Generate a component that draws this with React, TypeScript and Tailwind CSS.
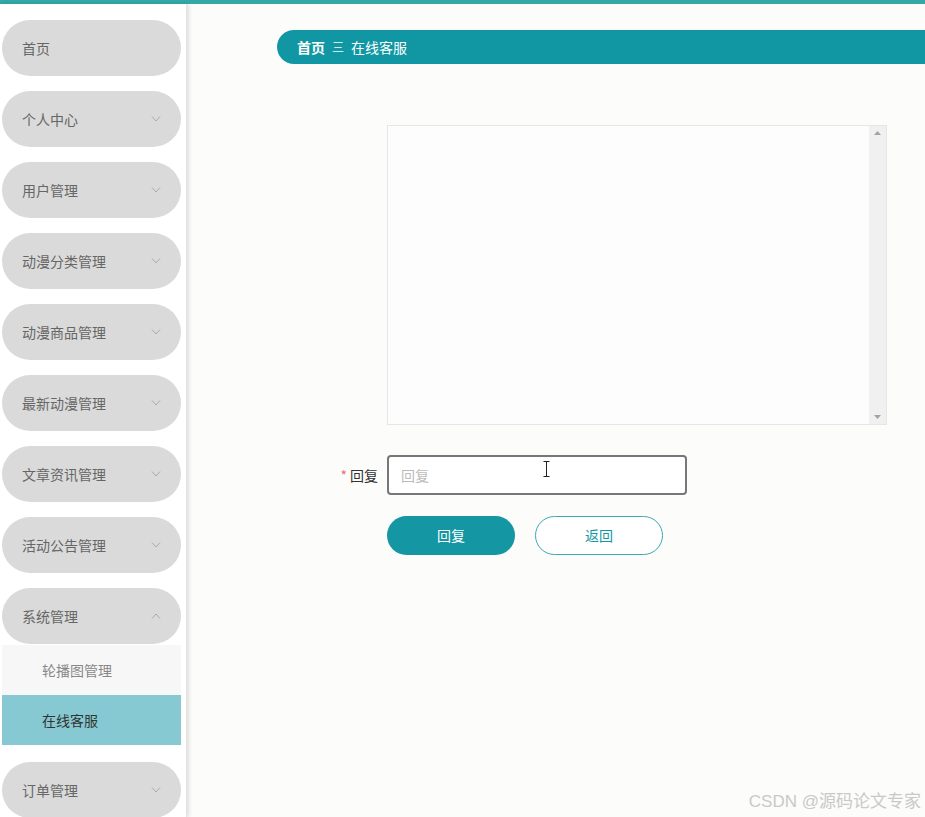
import React from "react";

const Chevron = ({ up }: { up?: boolean }) => (
  <svg width="10" height="6" viewBox="0 0 10 6" className="text-[#aaa]">
    <path d={up ? "M1 5.5 L5 1 L9 5.5" : "M1 0.5 L5 5 L9 0.5"} fill="none" stroke="currentColor" strokeWidth="1" />
  </svg>
);

const Pill = ({ label, arrow, up }: { label: string; arrow?: boolean; up?: boolean }) => (
  <div className="h-[56px] w-[179px] ml-[2px] rounded-full bg-[#dadada] flex items-center justify-between pl-[20px] pr-[20px] text-[14px] text-[#666]">
    <span>{label}</span>
    {arrow && <Chevron up={up} />}
  </div>
);

export default function App() {
  const font = { fontFamily: '"Microsoft YaHei", "Noto Sans CJK SC", "Liberation Sans", sans-serif' };
  return (
    <div className="w-[925px] h-[817px] overflow-hidden bg-[#fcfcfb] flex flex-col" style={font}>
      <div className="h-[4px] bg-[#34a7a6] shrink-0" />
      <div className="flex flex-1 min-h-0">
        <aside className="w-[187px] shrink-0 bg-white shadow-[2px_0_4px_rgba(0,0,0,0.12)] border-r border-[#e2e2e2] flex flex-col pt-[16px]">
          <div className="flex flex-col gap-[15px]">
            <Pill label="首页" />
            <Pill label="个人中心" arrow />
            <Pill label="用户管理" arrow />
            <Pill label="动漫分类管理" arrow />
            <Pill label="动漫商品管理" arrow />
            <Pill label="最新动漫管理" arrow />
            <Pill label="文章资讯管理" arrow />
            <Pill label="活动公告管理" arrow />
            <div>
              <Pill label="系统管理" arrow up />
              <div className="ml-[2px] w-[179px] mt-[1px]">
                <div className="h-[50px] bg-[#f7f7f7] flex items-center pl-[40px] text-[14px] text-[#888]">轮播图管理</div>
                <div className="h-[50px] bg-[#86c9d2] flex items-center pl-[40px] text-[14px] text-[#333]">在线客服</div>
              </div>
            </div>
          </div>
          <div className="mt-[17px]">
            <Pill label="订单管理" arrow />
          </div>
        </aside>
        <main className="flex-1 relative flex flex-col">
          <div className="mt-[26px] ml-[90px] h-[34px] rounded-l-full bg-[#1197a4] flex items-center pl-[20px] text-[14px] text-white">
            <span className="font-bold">首页</span>
            <span className="mx-[7px] text-[12px] opacity-80">三</span>
            <span>在线客服</span>
          </div>
          <div className="ml-[200px] mt-[61px] w-[500px] h-[300px] border border-[#e6e6e6] bg-[#fdfdfd] flex justify-end">
            <div className="w-[17px] h-full bg-[#f0f0f0] flex flex-col items-center justify-between py-[5px]">
              <svg width="7" height="4" viewBox="0 0 7 4"><path d="M0 4 L3.5 0 L7 4Z" fill="#a3a3a3" /></svg>
              <svg width="7" height="4" viewBox="0 0 7 4"><path d="M0 0 L3.5 4 L7 0Z" fill="#a3a3a3" /></svg>
            </div>
          </div>
          <div className="mt-[30px] flex items-center">
            <div className="w-[200px] text-right pr-[9px] text-[14px] text-[#333]">
              <span className="text-[#f56c6c] mr-[3px]">*</span>回复
            </div>
            <div className="relative w-[300px] h-[40px] border-2 border-[#777] rounded-[4px] bg-white flex items-center pl-[12px] text-[14px] text-[#bbb]">
              回复
              <svg className="absolute left-[154px] top-[4px]" width="7" height="16" viewBox="0 0 7 16">
                <path d="M0.5 0.5 H6.5 M3.5 0.5 V15.5 M0.5 15.5 H6.5" stroke="#222" strokeWidth="1" fill="none" />
              </svg>
            </div>
          </div>
          <div className="mt-[21px] ml-[200px] flex gap-[20px]">
            <button className="w-[128px] h-[39px] rounded-full bg-[#1497a3] text-white text-[14px]">回复</button>
            <button className="w-[128px] h-[39px] rounded-full border border-[#3fa9b3] bg-white text-[#1497a3] text-[14px]">返回</button>
          </div>
          <div className="absolute right-[4px] bottom-[3px] text-[17px] text-[#c9c9c9]" style={{ fontFamily: '"Liberation Sans", "Noto Sans CJK SC", sans-serif' }}>CSDN @源码论文专家</div>
        </main>
      </div>
    </div>
  );
}
